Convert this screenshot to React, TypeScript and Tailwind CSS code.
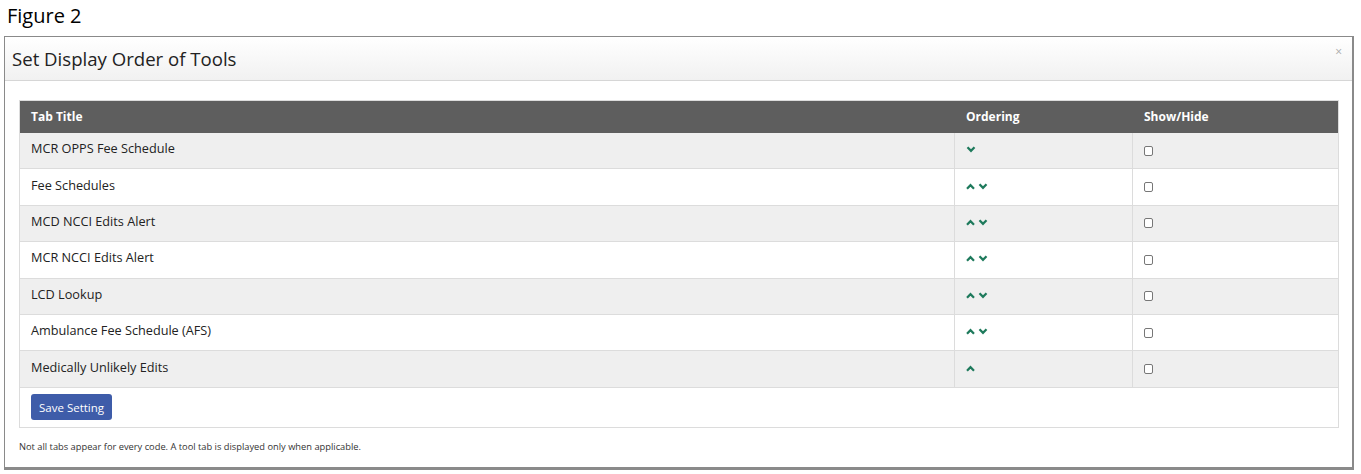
import React from "react";

type Row = { title: string; up: boolean; down: boolean };

const rows: Row[] = [
  { title: "MCR OPPS Fee Schedule", up: false, down: true },
  { title: "Fee Schedules", up: true, down: true },
  { title: "MCD NCCI Edits Alert", up: true, down: true },
  { title: "MCR NCCI Edits Alert", up: true, down: true },
  { title: "LCD Lookup", up: true, down: true },
  { title: "Ambulance Fee Schedule (AFS)", up: true, down: true },
  { title: "Medically Unlikely Edits", up: true, down: false },
];

function ChevronUp() {
  return (
    <svg width="9" height="7" viewBox="0 0 10 8" className="block">
      <path d="M1 6.5 L5 2.5 L9 6.5" fill="none" stroke="#1e7a5c" strokeWidth="2.6" />
    </svg>
  );
}

function ChevronDown() {
  return (
    <svg width="10" height="7" viewBox="0 0 10 8" className="block">
      <path d="M1 1.5 L5 5.5 L9 1.5" fill="none" stroke="#1e7a5c" strokeWidth="2.6" />
    </svg>
  );
}

export default function App() {
  return (
    <div
      className="h-[474px] w-[1361px] bg-white"
      style={{ fontFamily: '"Open Sans", "Liberation Sans", sans-serif' }}
    >
      <div className="pl-[7px] pt-[3px] text-[20px] leading-[26px] text-black">Figure 2</div>

      <div className="ml-[4px] mt-[7px] h-[434px] w-[1350px] border border-b-[3px] border-r-[2px] border-[#8a8a8a] bg-white">
        {/* Header */}
        <div className="relative flex h-[44px] items-center border-b border-[#d6d6d6] bg-gradient-to-b from-white to-[#f1f1f1] pl-[7px]">
          <h2 className="text-[18.6px] font-normal text-[#222]">Set Display Order of Tools</h2>
          <span className="absolute right-[10px] top-[6px] text-[12px] text-[#aaa]">×</span>
        </div>

        {/* Body */}
        <div className="pl-[14px] pr-[13px] pt-[19px]">
          <div className="border border-[#dcdcdc]">
            <div className="flex h-[32px] items-center bg-[#5e5e5e] text-[12px] font-bold text-white">
              <div className="flex-1 pl-[11px]">Tab Title</div>
              <div className="w-[178px] pl-[11px]">Ordering</div>
              <div className="w-[205px] pl-[11px]">Show/Hide</div>
            </div>
            {rows.map((r, i) => (
              <div
                key={r.title}
                className={`flex h-[36.4px] border-b border-[#dcdcdc] text-[12.7px] text-[#222] ${
                  i % 2 === 0 ? "bg-[#efefef]" : "bg-white"
                }`}
              >
                <div className="flex flex-1 items-center border-r border-[#dcdcdc] pb-[4px] pl-[11px]">
                  {r.title}
                </div>
                <div className="flex w-[178px] items-center gap-[3px] border-r border-[#dcdcdc] pb-[2px] pl-[11px]">
                  {r.up && <ChevronUp />}
                  {r.down && <ChevronDown />}
                </div>
                <div className="flex w-[205px] items-center pl-[11px]">
                  <span className="block h-[10px] w-[9px] rounded-[2px] border border-[#777] bg-white" />
                </div>
              </div>
            ))}
            <div className="flex h-[39px] items-center pl-[11px]">
              <button className="h-[26px] rounded-[3px] bg-[#3e5ca9] px-[8px] text-[11.5px] text-white">
                Save Setting
              </button>
            </div>
          </div>
          <p className="mt-[12px] text-[9.3px] text-[#333]">
            Not all tabs appear for every code. A tool tab is displayed only when applicable.
          </p>
        </div>
      </div>
    </div>
  );
}
